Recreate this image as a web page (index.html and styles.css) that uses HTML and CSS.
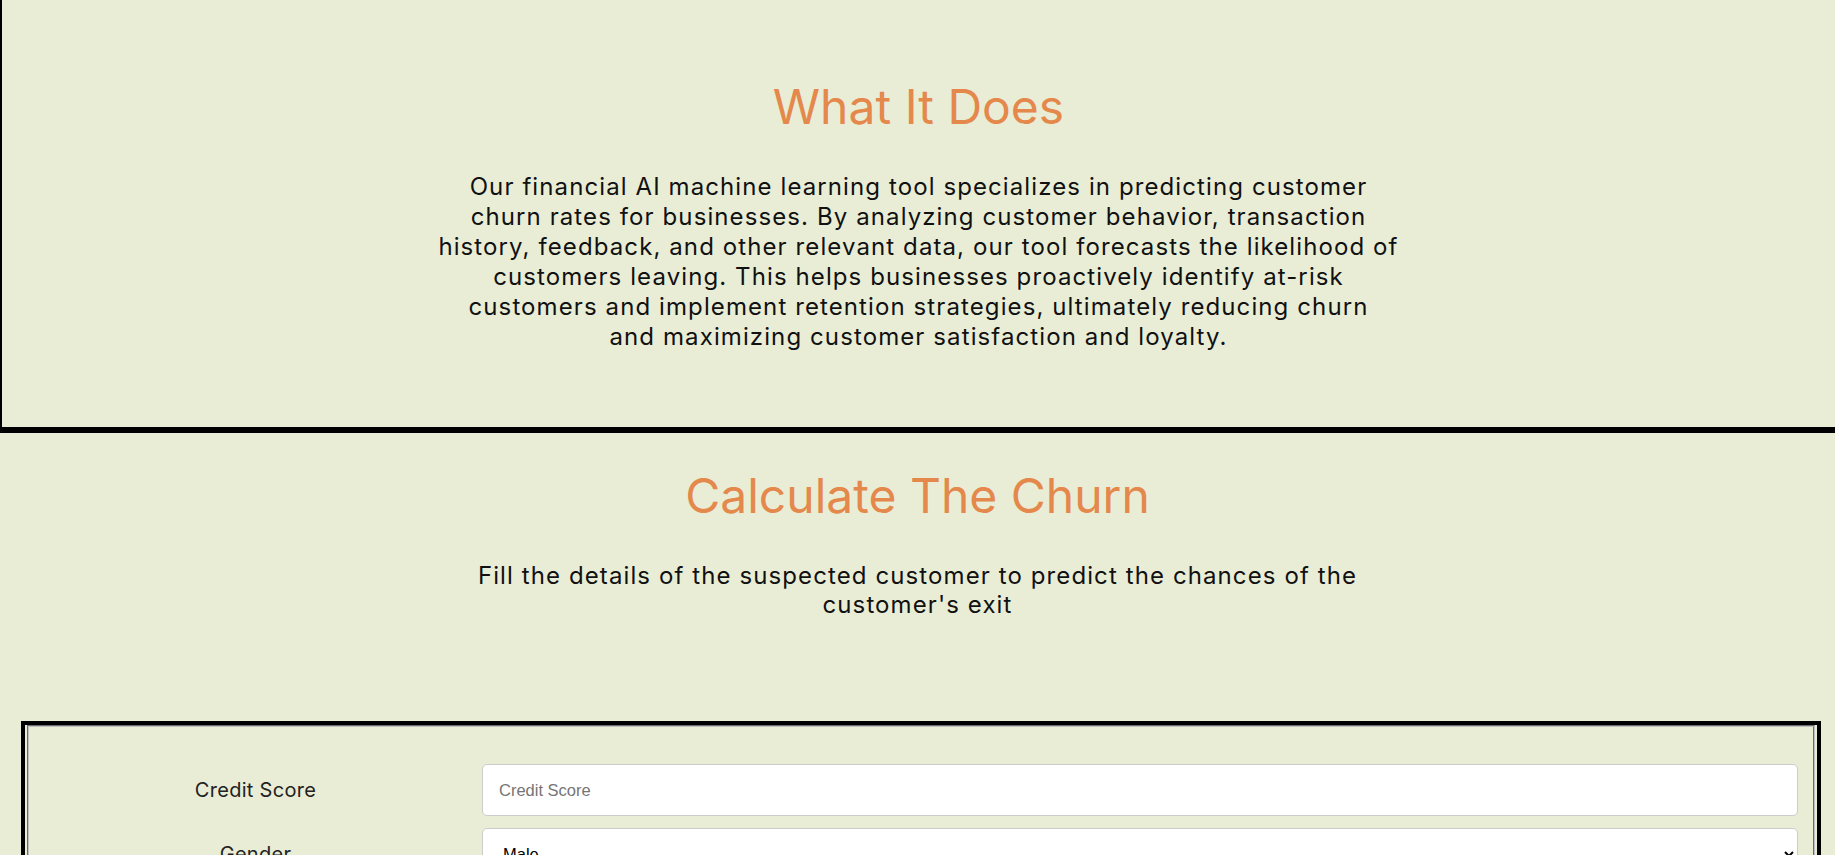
FILE: index.html
```html
<!DOCTYPE html>
<html lang="en">
<head>
    <meta charset="UTF-8">
    <meta name="viewport" content="width=device-width, initial-scale=1.0">
    <title>Churn Predictor</title>
    <link rel="stylesheet" href="styles.css">
</head>
<body>
    <section class="about">
        <h1 class="title">What It Does</h1>
        <p class="lead about-text">Our financial AI machine learning tool specializes in predicting customer churn rates for businesses. By analyzing customer behavior, transaction history, feedback, and other relevant data, our tool forecasts the likelihood of customers leaving. This helps businesses proactively identify at-risk customers and implement retention strategies, ultimately reducing churn<br>and maximizing customer satisfaction and loyalty.</p>
    </section>

    <section class="calc">
        <h1 class="title">Calculate The Churn</h1>
        <p class="lead calc-text">Fill the details of the suspected customer to predict the chances of the customer's exit</p>

        <div class="form-box">
            <fieldset>
                <form id="churnForm" class="churn-form">
                    <label for="creditScore">Credit Score</label>
                    <input type="number" id="creditScore" placeholder="Credit Score">

                    <label for="gender">Gender</label>
                    <select id="gender">
                        <option>Male</option>
                        <option>Female</option>
                    </select>

                    <label for="age">Age</label>
                    <input type="number" id="age" placeholder="Age">
                </form>
            </fieldset>
        </div>
    </section>
</body>
</html>
```

FILE: styles.css
```css
* {
    box-sizing: border-box;
}

body {
    margin: 0;
    background: #e9edd6;
    font-family: 'Inter', 'Liberation Sans', sans-serif;
    color: #111;
    overflow: hidden;
}

.about {
    border-left: 2px solid #000;
    border-bottom: 6px solid #000;
    padding: 78px 0 75px;
    text-align: center;
}

.title {
    margin: 0;
    font-size: 48px;
    line-height: 58px;
    font-weight: 400;
    color: #e4884b;
}

.lead {
    margin: 36px auto 0;
    font-size: 24px;
    line-height: 30px;
    font-weight: 400;
    letter-spacing: 1.1px;
}

.about-text {
    max-width: 965px;
}

.calc {
    padding-top: 34px;
    text-align: center;
}

.calc-text {
    max-width: 930px;
    line-height: 29px;
}

.form-box {
    margin: 102px 14px 0 21px;
    border: 4px solid #000;
}

fieldset {
    margin: 0 2px;
    padding: 37px 15px 20px 0;
    border: 2px groove #c0c0c0;
}

.churn-form {
    display: grid;
    grid-template-columns: 453px 1fr;
    row-gap: 12px;
    align-items: center;
}

.churn-form label {
    font-size: 20px;
    letter-spacing: 0.3px;
    color: #222;
    text-align: center;
}

.churn-form input,
.churn-form select {
    width: 100%;
    height: 52px;
    padding: 0 16px;
    border: 1px solid #cccccc;
    border-radius: 5px;
    background: #fff;
    font-family: 'Liberation Sans', Arial, sans-serif;
    font-size: 16.5px;
    color: #000;
}

.churn-form input::placeholder {
    color: #757575;
}
```
